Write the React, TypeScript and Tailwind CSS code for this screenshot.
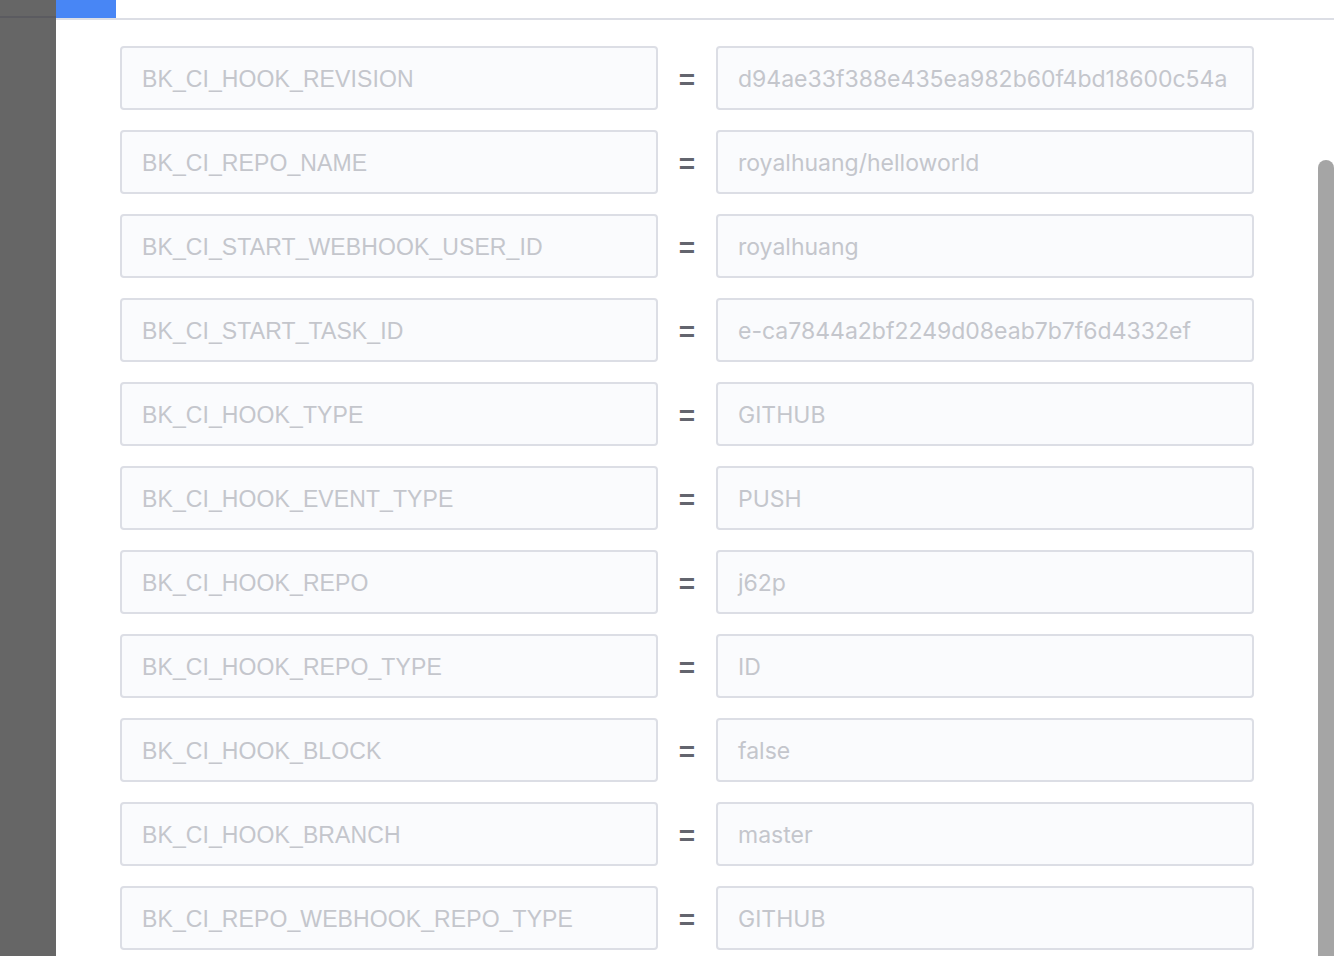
import React from "react";

const rows: [string, string][] = [
  ["BK_CI_HOOK_REVISION", "d94ae33f388e435ea982b60f4bd18600c54a"],
  ["BK_CI_REPO_NAME", "royalhuang/helloworld"],
  ["BK_CI_START_WEBHOOK_USER_ID", "royalhuang"],
  ["BK_CI_START_TASK_ID", "e-ca7844a2bf2249d08eab7b7f6d4332ef"],
  ["BK_CI_HOOK_TYPE", "GITHUB"],
  ["BK_CI_HOOK_EVENT_TYPE", "PUSH"],
  ["BK_CI_HOOK_REPO", "j62p"],
  ["BK_CI_HOOK_REPO_TYPE", "ID"],
  ["BK_CI_HOOK_BLOCK", "false"],
  ["BK_CI_HOOK_BRANCH", "master"],
  ["BK_CI_REPO_WEBHOOK_REPO_TYPE", "GITHUB"],
];

const Field: React.FC<{ value: string; font: string }> = ({ value, font }) => (
  <div className="w-[538px] h-16 shrink-0 flex items-center pl-5 pr-3 pt-[3px] rounded-[4px] border-2 border-[#dcdee5] bg-[#fafbfd] overflow-hidden">
    <span className={`text-[23px] text-[#c4c6cc] whitespace-nowrap ${font}`}>{value}</span>
  </div>
);

export default function App() {
  return (
    <div
      className="w-[1334px] h-[956px] overflow-hidden flex bg-white"
      style={{ fontFamily: '"Liberation Sans", Arial, sans-serif' }}
    >
      {/* dimmed side */}
      <div className="w-14 shrink-0 bg-[#666666] flex flex-col">
        <div className="h-[18px] border-b-2 border-[#5b5b60]" />
      </div>

      {/* panel */}
      <div className="flex-1 flex flex-col min-w-0">
        <div className="h-5 shrink-0 flex border-b-2 border-[#dcdee5]">
          <div className="w-[60px] bg-[#4886f5]" />
        </div>
        <div className="flex-1 flex min-h-0">
          <div className="flex-1 flex flex-col gap-5 pl-16 pt-[26px]">
            {rows.map(([k, v]) => (
              <div key={k} className="flex items-center">
                <Field value={k} font="font-['Liberation_Sans',Arial,sans-serif] tracking-[0.1px]" />
                <div className="w-[58px] shrink-0 flex justify-center pt-[4px]">
                  <span className="text-[28px] leading-none text-[#63656e] font-bold">=</span>
                </div>
                <Field value={v} font="font-['Inter','Liberation_Sans',sans-serif]" />
              </div>
            ))}
          </div>
          <div className="w-4 shrink-0 flex flex-col pt-[140px]">
            <div className="flex-1 bg-[#a5a5a5] rounded-t-lg" />
          </div>
        </div>
      </div>
    </div>
  );
}
